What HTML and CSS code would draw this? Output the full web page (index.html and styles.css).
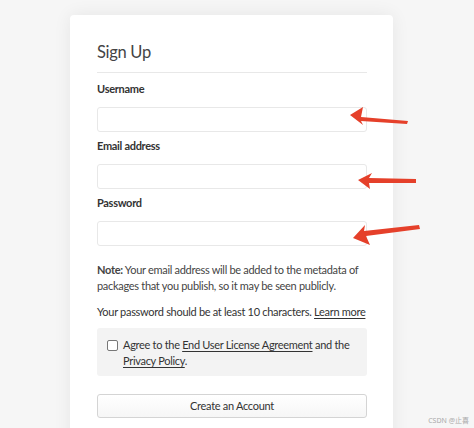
FILE: index.html
```html
<!DOCTYPE html>
<html>
<head>
<meta charset="utf-8">
<link rel="stylesheet" href="styles.css">
</head>
<body>
<div class="card">
  <h1 class="title">Sign Up</h1>
  <form class="form">
    <label class="label">Username</label>
    <input class="input" type="text">
    <label class="label">Email address</label>
    <input class="input" type="text">
    <label class="label">Password</label>
    <input class="input" type="password">
    <p class="note"><b>Note:</b> Your email address will be added to the metadata of packages that you publish, so it may be seen publicly.</p>
    <p class="pw">Your password should be at least 10 characters. <a class="link">Learn more</a></p>
    <div class="agree">
      <span class="box"></span>
      <span class="agree-text">Agree to the <a class="link">End User License Agreement</a> and the <a class="link">Privacy Policy</a>.</span>
    </div>
    <div class="button">Create an Account</div>
  </form>
</div>
<svg class="arrows" width="474" height="428" viewBox="0 0 474 428">
  <g fill="#e5402a">
    <polygon points="350,115 363,107 361,117 408,121 407,124 361,121 363,125"/>
    <polygon points="358,180 372,173 369,178 416,179 416,183 369,183 370,189"/>
    <polygon points="353,238 365,225 364,231 419,225 420,229 366,236 370,245"/>
  </g>
</svg>
<div class="mark">CSDN @止喜</div>
</body>
</html>
```
FILE: styles.css
```css
html, body {
  margin: 0;
  padding: 0;
}
body {
  width: 474px;
  height: 428px;
  overflow: hidden;
  background: #f6f6f6;
  font-family: Lato, "Noto Sans", sans-serif;
  color: #333;
  position: relative;
  letter-spacing: -0.3px;
}
.card {
  margin: 15px 0 0 70px;
  width: 323px;
  height: 440px;
  box-sizing: border-box;
  padding: 25px 26px 0 27px;
  background: #fff;
  border-radius: 4px;
  box-shadow: 0 0 18px rgba(0,0,0,0.07);
}
.title {
  margin: 0;
  font-size: 16.5px;
  line-height: 24px;
  font-weight: 400;
  color: #444;
  padding-bottom: 8px;
  border-bottom: 1px solid #e8e8e8;
}
.form {
  display: flex;
  flex-direction: column;
  padding-top: 8px;
}
.label {
  font-size: 11px;
  line-height: 16px;
  font-weight: 700;
  color: #333;
  margin-bottom: 10px;
}
.input {
  height: 25px;
  box-sizing: border-box;
  border: 1px solid #e8e8e8;
  border-radius: 3px;
  margin: 0 0 6px;
  padding: 0;
  background: #fff;
}
.note {
  margin: 10px 0 0;
  font-size: 11px;
  line-height: 16px;
  color: #444;
}
.note b { font-weight: 700; }
.pw {
  margin: 10px 0 0;
  font-size: 11px;
  line-height: 16px;
  color: #333;
  white-space: nowrap;
}
.link {
  color: #333;
  text-decoration: underline;
  text-underline-offset: 2px;
}
.agree {
  margin-top: 8px;
  background: #f3f3f3;
  border-radius: 3px;
  padding: 9px 10px 7px;
  display: flex;
  align-items: flex-start;
  gap: 5px;
}
.box {
  flex: none;
  width: 9px;
  height: 9px;
  margin-top: 3px;
  border: 1px solid #777;
  border-radius: 2px;
  background: #fff;
}
.agree-text {
  font-size: 11px;
  line-height: 16px;
  color: #333;
}
.button {
  margin-top: 18px;
  height: 24px;
  box-sizing: border-box;
  border: 1px solid #d4d4d4;
  border-radius: 3px;
  background: linear-gradient(#fff, #f6f6f6);
  font-size: 11px;
  line-height: 22px;
  text-align: center;
  color: #333;
}
.arrows {
  position: absolute;
  left: 0;
  top: 0;
}
.mark {
  position: absolute;
  right: 5px;
  bottom: 3px;
  font-size: 7px;
  letter-spacing: 0;
  color: #aaa;
  font-family: "Noto Sans", "Noto Sans CJK SC", sans-serif;
}
```
